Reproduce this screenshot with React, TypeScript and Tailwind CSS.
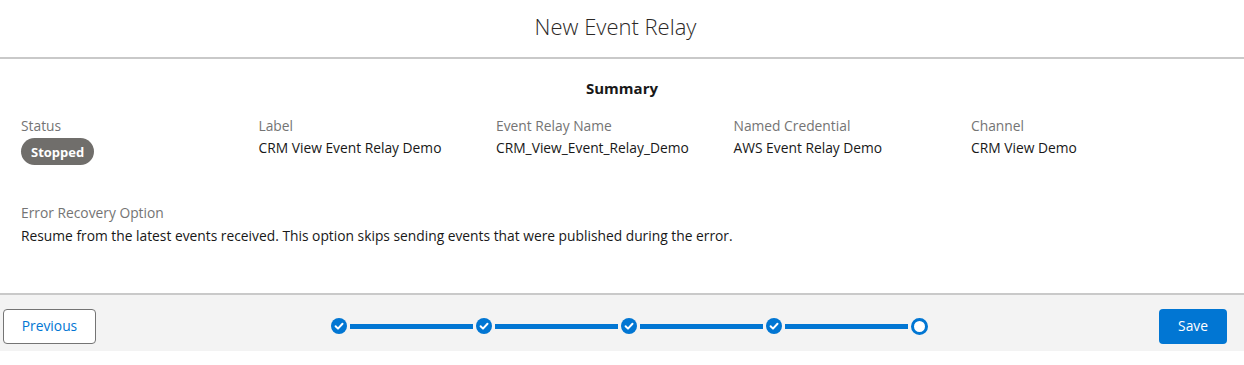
import React from 'react'

const font = { fontFamily: '"Open Sans", "Noto Sans", sans-serif' }

const fields = [
  { label: 'Label', value: 'CRM View Event Relay Demo' },
  { label: 'Event Relay Name', value: 'CRM_View_Event_Relay_Demo' },
  { label: 'Named Credential', value: 'AWS Event Relay Demo' },
  { label: 'Channel', value: 'CRM View Demo' }
]

function CheckStep(): React.JSX.Element {
  return (
    <svg width="16" height="16" viewBox="0 0 16 16" className="shrink-0">
      <circle cx="8" cy="8" r="8" fill="#0176d3" />
      <path d="M4.6 8.3 L7 10.6 L11.5 5.8" fill="none" stroke="#fff" strokeWidth="2" strokeLinecap="round" strokeLinejoin="round" />
    </svg>
  )
}

function Line(): React.JSX.Element {
  return <div className="mx-[3px] h-[5px] w-[123px] bg-[#0176d3]" />
}

export default function App(): React.JSX.Element {
  return (
    <div className="w-[1244px] h-[365px] bg-white text-[#181818]" style={font}>
      <header className="flex h-[59px] items-center justify-center border-b-2 border-[#c9c9c9] pr-[13px]">
        <h2 className="text-[22px] font-light leading-tight pb-[3px] text-[#2b2826]">New Event Relay</h2>
      </header>

      <section className="h-[234px] pt-[19px]">
        <h3 className="text-center text-[15px] font-bold leading-[20px]">Summary</h3>
        <div className="mt-[18px] grid grid-cols-[repeat(5,237.5px)] pl-[21px] text-[13.8px] leading-[20px]">
          <div>
            <div className="text-[#747474]">Status</div>
            <span className="mt-[2px] inline-flex h-[27px] items-center rounded-full bg-[#706e6b] px-[10px] text-[13px] font-bold text-white">
              Stopped
            </span>
          </div>
          {fields.map((f) => (
            <div key={f.label}>
              <div className="text-[#747474]">{f.label}</div>
              <div className="mt-[2px]">{f.value}</div>
            </div>
          ))}
        </div>
        <div className="mt-[38px] pl-[21px] text-[13.8px] leading-[20px]">
          <div className="text-[#747474]">Error Recovery Option</div>
          <div className="mt-[3px]">
            Resume from the latest events received. This option skips sending events that were published during the error.
          </div>
        </div>
      </section>

      <footer className="flex h-[58px] items-center border-t-2 border-[#c9c9c9] bg-[#f3f3f3] pl-[3px] pr-[17px] pt-[6px]">
        <button className="h-[35px] w-[93px] rounded-[4px] border border-[#747474] bg-white text-[13.8px] text-[#0176d3]">
          Previous
        </button>
        <div className="ml-[235px] flex items-center">
          <CheckStep />
          <Line />
          <CheckStep />
          <Line />
          <CheckStep />
          <Line />
          <CheckStep />
          <Line />
          <div className="h-[17px] w-[17px] shrink-0 rounded-full border-[3px] border-[#0176d3] bg-white" />
        </div>
        <button className="ml-auto h-[35px] w-[68px] rounded-[4px] bg-[#0176d3] text-[13.8px] text-white">
          Save
        </button>
      </footer>
    </div>
  )
}
